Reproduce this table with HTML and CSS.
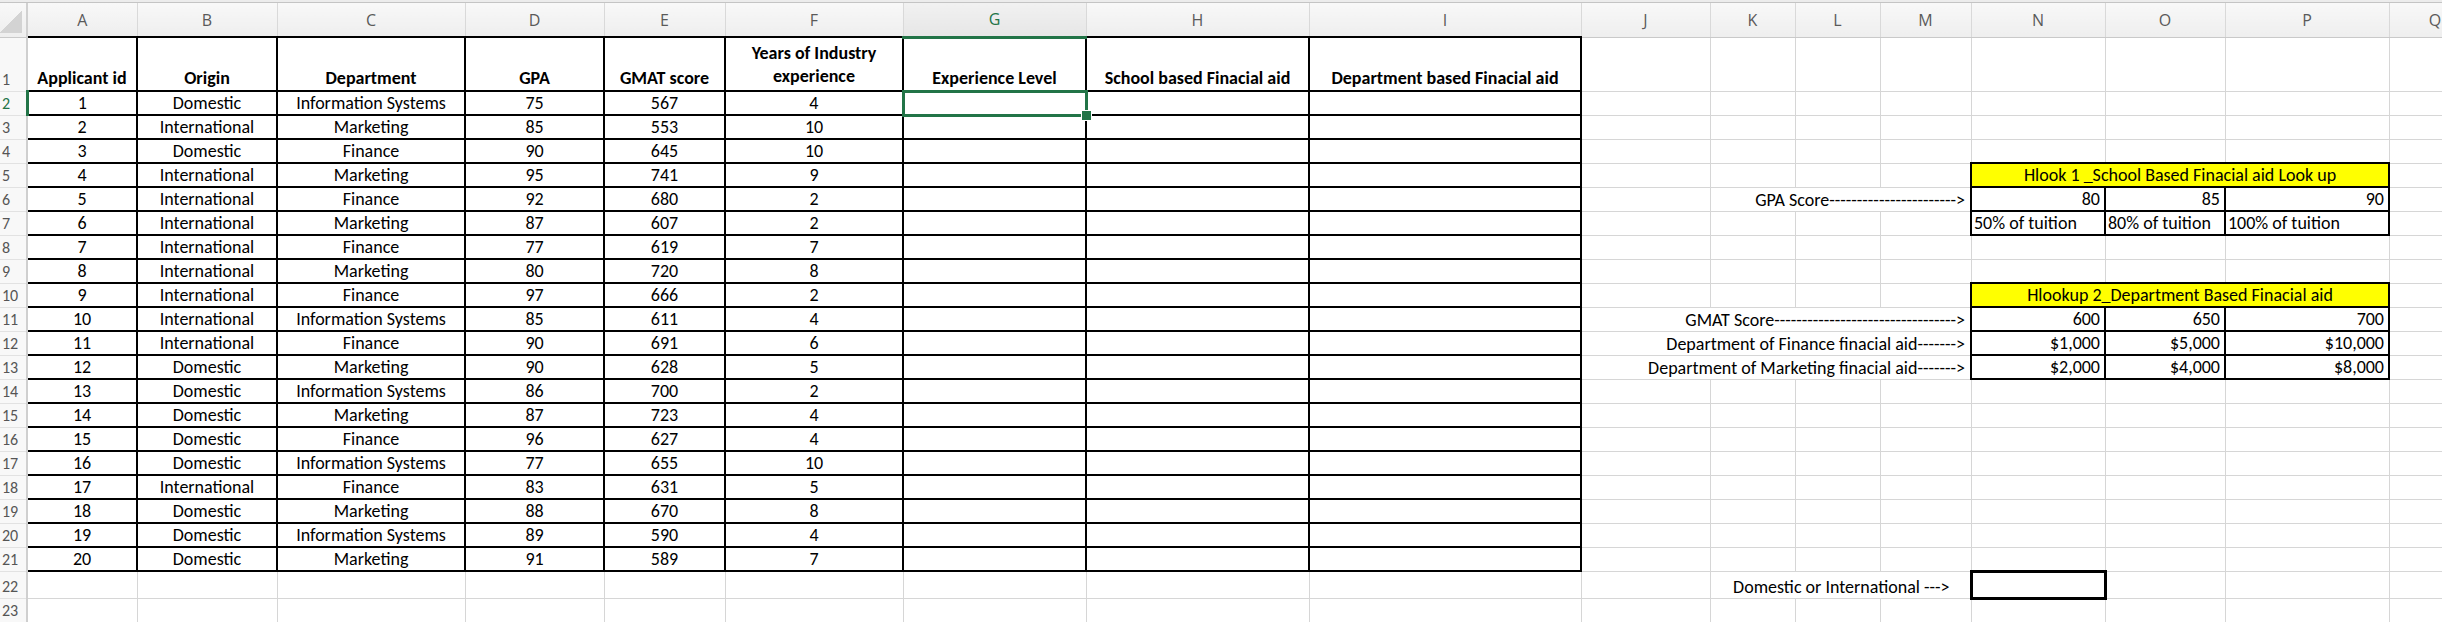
FILE: index.html
```html
<!DOCTYPE html>
<html>
<head>
<meta charset="utf-8">
<link rel="stylesheet" href="styles.css">
</head>
<body>
<div class="topbar"></div>
<table class="sheet">
<colgroup>
<col class="w-rh"><col class="w-a"><col class="w-b"><col class="w-c"><col class="w-d"><col class="w-e"><col class="w-f"><col class="w-g"><col class="w-h"><col class="w-i"><col class="w-j"><col class="w-k"><col class="w-l"><col class="w-m"><col class="w-n"><col class="w-o"><col class="w-p"><col class="w-q">
</colgroup>
<tr class="hdr">
<th class="corner"><div class="tri"></div></th><th class="col">A</th><th class="col">B</th><th class="col">C</th><th class="col">D</th><th class="col">E</th><th class="col">F</th><th class="col colsel">G</th><th class="col">H</th><th class="col">I</th><th class="col">J</th><th class="col">K</th><th class="col">L</th><th class="col">M</th><th class="col">N</th><th class="col">O</th><th class="col">P</th><th class="col">Q</th>
</tr>
<tr class="r1">
<td class="rh">1</td><td class="b h">Applicant id</td><td class="b h">Origin</td><td class="b h">Department</td><td class="b h">GPA</td><td class="b h">GMAT score</td><td class="b h wrap">Years of Industry experience</td><td class="b h">Experience Level</td><td class="b h">School based Finacial aid</td><td class="b h">Department based Finacial aid</td><td></td><td></td><td></td><td></td><td></td><td></td><td></td><td></td>
</tr>
<tr class="r">
<td class="rh rhsel">2</td><td class="b">1</td><td class="b">Domestic</td><td class="b">Information Systems</td><td class="b">75</td><td class="b">567</td><td class="b">4</td><td class="b sel"><span class="handle"></span></td><td class="b"></td><td class="b"></td><td></td><td></td><td></td><td></td><td></td><td></td><td></td><td></td>
</tr>
<tr class="r">
<td class="rh">3</td><td class="b">2</td><td class="b">International</td><td class="b">Marketing</td><td class="b">85</td><td class="b">553</td><td class="b">10</td><td class="b"></td><td class="b"></td><td class="b"></td><td></td><td></td><td></td><td></td><td></td><td></td><td></td><td></td>
</tr>
<tr class="r">
<td class="rh">4</td><td class="b">3</td><td class="b">Domestic</td><td class="b">Finance</td><td class="b">90</td><td class="b">645</td><td class="b">10</td><td class="b"></td><td class="b"></td><td class="b"></td><td></td><td></td><td></td><td></td><td></td><td></td><td></td><td></td>
</tr>
<tr class="r">
<td class="rh">5</td><td class="b">4</td><td class="b">International</td><td class="b">Marketing</td><td class="b">95</td><td class="b">741</td><td class="b">9</td><td class="b"></td><td class="b"></td><td class="b"></td><td></td><td></td><td></td><td></td><td class="lk yellow" colspan="3">Hlook 1 _School Based Finacial aid Look up</td><td></td>
</tr>
<tr class="r">
<td class="rh">6</td><td class="b">5</td><td class="b">International</td><td class="b">Finance</td><td class="b">92</td><td class="b">680</td><td class="b">2</td><td class="b"></td><td class="b"></td><td class="b"></td><td></td><td class="lbl" colspan="3">GPA Score-----------------------&gt;</td><td class="lk num">80</td><td class="lk num">85</td><td class="lk num">90</td><td></td>
</tr>
<tr class="r">
<td class="rh">7</td><td class="b">6</td><td class="b">International</td><td class="b">Marketing</td><td class="b">87</td><td class="b">607</td><td class="b">2</td><td class="b"></td><td class="b"></td><td class="b"></td><td></td><td></td><td></td><td></td><td class="lk txt">50% of tuition</td><td class="lk txt">80% of tuition</td><td class="lk txt">100% of tuition</td><td></td>
</tr>
<tr class="r">
<td class="rh">8</td><td class="b">7</td><td class="b">International</td><td class="b">Finance</td><td class="b">77</td><td class="b">619</td><td class="b">7</td><td class="b"></td><td class="b"></td><td class="b"></td><td></td><td></td><td></td><td></td><td></td><td></td><td></td><td></td>
</tr>
<tr class="r">
<td class="rh">9</td><td class="b">8</td><td class="b">International</td><td class="b">Marketing</td><td class="b">80</td><td class="b">720</td><td class="b">8</td><td class="b"></td><td class="b"></td><td class="b"></td><td></td><td></td><td></td><td></td><td></td><td></td><td></td><td></td>
</tr>
<tr class="r">
<td class="rh">10</td><td class="b">9</td><td class="b">International</td><td class="b">Finance</td><td class="b">97</td><td class="b">666</td><td class="b">2</td><td class="b"></td><td class="b"></td><td class="b"></td><td></td><td></td><td></td><td></td><td class="lk yellow" colspan="3">Hlookup 2_Department Based Finacial aid</td><td></td>
</tr>
<tr class="r">
<td class="rh">11</td><td class="b">10</td><td class="b">International</td><td class="b">Information Systems</td><td class="b">85</td><td class="b">611</td><td class="b">4</td><td class="b"></td><td class="b"></td><td class="b"></td><td class="lbl" colspan="4">GMAT Score---------------------------------&gt;</td><td class="lk num">600</td><td class="lk num">650</td><td class="lk num">700</td><td></td>
</tr>
<tr class="r">
<td class="rh">12</td><td class="b">11</td><td class="b">International</td><td class="b">Finance</td><td class="b">90</td><td class="b">691</td><td class="b">6</td><td class="b"></td><td class="b"></td><td class="b"></td><td class="lbl" colspan="4">Department of Finance finacial aid-------&gt;</td><td class="lk num">$1,000</td><td class="lk num">$5,000</td><td class="lk num">$10,000</td><td></td>
</tr>
<tr class="r">
<td class="rh">13</td><td class="b">12</td><td class="b">Domestic</td><td class="b">Marketing</td><td class="b">90</td><td class="b">628</td><td class="b">5</td><td class="b"></td><td class="b"></td><td class="b"></td><td class="lbl" colspan="4">Department of Marketing finacial aid-------&gt;</td><td class="lk num">$2,000</td><td class="lk num">$4,000</td><td class="lk num">$8,000</td><td></td>
</tr>
<tr class="r">
<td class="rh">14</td><td class="b">13</td><td class="b">Domestic</td><td class="b">Information Systems</td><td class="b">86</td><td class="b">700</td><td class="b">2</td><td class="b"></td><td class="b"></td><td class="b"></td><td></td><td></td><td></td><td></td><td></td><td></td><td></td><td></td>
</tr>
<tr class="r">
<td class="rh">15</td><td class="b">14</td><td class="b">Domestic</td><td class="b">Marketing</td><td class="b">87</td><td class="b">723</td><td class="b">4</td><td class="b"></td><td class="b"></td><td class="b"></td><td></td><td></td><td></td><td></td><td></td><td></td><td></td><td></td>
</tr>
<tr class="r">
<td class="rh">16</td><td class="b">15</td><td class="b">Domestic</td><td class="b">Finance</td><td class="b">96</td><td class="b">627</td><td class="b">4</td><td class="b"></td><td class="b"></td><td class="b"></td><td></td><td></td><td></td><td></td><td></td><td></td><td></td><td></td>
</tr>
<tr class="r">
<td class="rh">17</td><td class="b">16</td><td class="b">Domestic</td><td class="b">Information Systems</td><td class="b">77</td><td class="b">655</td><td class="b">10</td><td class="b"></td><td class="b"></td><td class="b"></td><td></td><td></td><td></td><td></td><td></td><td></td><td></td><td></td>
</tr>
<tr class="r">
<td class="rh">18</td><td class="b">17</td><td class="b">International</td><td class="b">Finance</td><td class="b">83</td><td class="b">631</td><td class="b">5</td><td class="b"></td><td class="b"></td><td class="b"></td><td></td><td></td><td></td><td></td><td></td><td></td><td></td><td></td>
</tr>
<tr class="r">
<td class="rh">19</td><td class="b">18</td><td class="b">Domestic</td><td class="b">Marketing</td><td class="b">88</td><td class="b">670</td><td class="b">8</td><td class="b"></td><td class="b"></td><td class="b"></td><td></td><td></td><td></td><td></td><td></td><td></td><td></td><td></td>
</tr>
<tr class="r">
<td class="rh">20</td><td class="b">19</td><td class="b">Domestic</td><td class="b">Information Systems</td><td class="b">89</td><td class="b">590</td><td class="b">4</td><td class="b"></td><td class="b"></td><td class="b"></td><td></td><td></td><td></td><td></td><td></td><td></td><td></td><td></td>
</tr>
<tr class="r">
<td class="rh">21</td><td class="b">20</td><td class="b">Domestic</td><td class="b">Marketing</td><td class="b">91</td><td class="b">589</td><td class="b">7</td><td class="b"></td><td class="b"></td><td class="b"></td><td></td><td></td><td></td><td></td><td></td><td></td><td></td><td></td>
</tr>
<tr class="r22">
<td class="rh">22</td><td></td><td></td><td></td><td></td><td></td><td></td><td></td><td></td><td></td><td></td><td class="lbl lbl22" colspan="3">Domestic or International ---&gt;</td><td class="box"></td><td></td><td></td><td></td>
</tr>
<tr class="r">
<td class="rh">23</td><td></td><td></td><td></td><td></td><td></td><td></td><td></td><td></td><td></td><td></td><td></td><td></td><td></td><td></td><td></td><td></td><td></td>
</tr>
</table>
</body>
</html>
```
FILE: styles.css
```css
html, body {
  margin: 0;
  padding: 0;
  background: #ffffff;
  overflow: hidden;
}

.topbar {
  height: 2px;
  background: #ececec;
  border-bottom: 1px solid #c4c4c4;
}

.sheet {
  border-collapse: collapse;
  table-layout: fixed;
  width: 2481px;
  font-family: Carlito, Lato, "Open Sans", sans-serif;
  font-size: 18px;
  color: #000;
}

.w-rh { width: 27px; }
.w-a { width: 110px; }
.w-b { width: 140px; }
.w-c { width: 188px; }
.w-d { width: 139px; }
.w-e { width: 121px; }
.w-f { width: 178px; }
.w-g { width: 183px; }
.w-h { width: 223px; }
.w-i { width: 272px; }
.w-j { width: 129px; }
.w-k { width: 85px; }
.w-l { width: 85px; }
.w-m { width: 91px; }
.w-n { width: 134px; }
.w-o { width: 120px; }
.w-p { width: 164px; }
.w-q { width: 92px; }

.hdr { height: 34px; }
.r1 { height: 54px; }
.r { height: 24px; }
.r22 { height: 27px; }

th.col, th.corner {
  background: linear-gradient(#f8f8f8, #eeeeee);
  border-right: 1px solid #d9d9d9;
  border-bottom: 1px solid #c9c9c9;
  padding: 0;
  font-family: "Open Sans", "Liberation Sans", sans-serif;
  font-weight: 400;
  font-size: 16px;
  color: #5a5a5a;
  text-align: center;
  vertical-align: middle;
}

th.corner {
  vertical-align: bottom;
  border-right: 2px solid #d0d0d0;
}

.tri {
  width: 22px;
  height: 22px;
  margin: 0 0 4px 0;
  background: linear-gradient(to bottom right, transparent 50%, #d3d3d3 50%);
}

th.colsel {
  color: #227447;
  border-bottom: 3px solid #227447;
  background: linear-gradient(#f1f1f1, #e6e6e6);
}

td {
  border: 1px solid #d6d6d6;
  padding: 0 3px 0 3px;
  vertical-align: bottom;
  line-height: 20px;
  white-space: nowrap;
  overflow: hidden;
}

td.rh {
  background: #f8f8f8;
  border-right: 2px solid #cfcfcf;
  border-bottom: 1px solid #e2e2e2;
  border-left: none;
  padding: 0 0 1px 2px;
  font-size: 16px;
  color: #555555;
  text-align: left;
}

td.rhsel {
  color: #227447;
  border-right: 3px solid #227447;
}

td.b {
  border: 2px solid #000;
  text-align: center;
  padding-bottom: 1px;
}

td.h {
  font-weight: 700;
  padding-bottom: 2px;
}

td.wrap {
  white-space: normal;
  line-height: 23px;
}

td.sel {
  border: 3px solid #227447;
  position: relative;
  overflow: visible;
}

.handle {
  position: absolute;
  right: -7px;
  bottom: -7px;
  width: 9px;
  height: 9px;
  background: #227447;
  border: 1px solid #ffffff;
}

td.lk {
  border: 2px solid #000;
  padding-bottom: 1px;
}

td.yellow {
  background: #ffff00;
  text-align: center;
}

td.num {
  text-align: right;
  padding-right: 4px;
}

td.txt {
  text-align: left;
  padding-left: 2px;
}

td.lbl {
  text-align: right;
  padding-right: 5px;
  padding-bottom: 1px;
}

td.lbl22 {
  padding-right: 20px;
}

td.box {
  border: 3px solid #000;
}
```
